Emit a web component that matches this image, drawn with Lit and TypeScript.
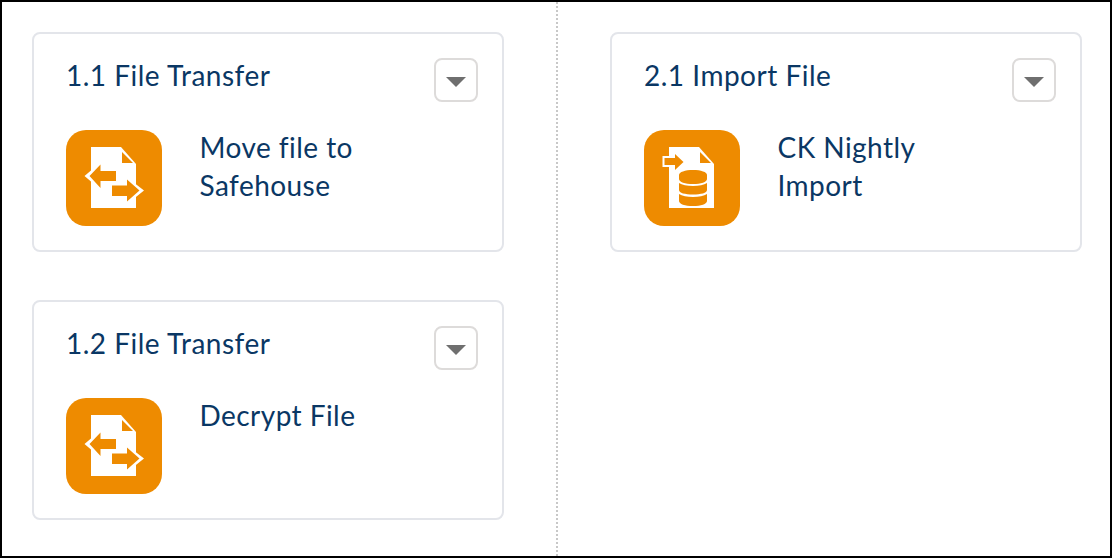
import {LitElement, html, css, svg} from 'lit';
import {customElement, property} from 'lit/decorators.js';

const page = svg`<path d="M25 17H55L70 34V78H25Z" fill="#fff"/><path d="M56 22V33H67Z" fill="#ee8b00"/>`;

const transferIcon = svg`
  ${page}
  <path d="M18.5 46L35.500 31.500V39H52V52H35.500V60.500Z" fill="#fff"/>
  <path d="M23.500 46L34.500 34.500V41H50V51H34.500V58Z" fill="#ee8b00"/>
  <path d="M78 60.500L60 46.500V54H44V67H60V75Z" fill="#fff"/>
  <path d="M73.500 60.500L61 49.500V55.500H46V66H61V71.500Z" fill="#ee8b00"/>
`;

const importIcon = svg`
  ${page}
  <path d="M18.500 26H30V22L41 32L30 42V37H18.500Z" fill="#fff"/>
  <path d="M20.500 28H31V24L39.500 32L31 40V35H20.500Z" fill="#ee8b00"/>
  <path d="M35 45C35 42 41 40 49 40C57 40 63 42 63 45V49C63 52 57 54 49 54C41 54 35 52 35 49Z" fill="#ee8b00"/>
  <path d="M35 53C38 55 43 56 49 56C55 56 60 55 63 53V60C63 63 57 64.500 49 64.500C41 64.500 35 63 35 60Z" fill="#ee8b00"/>
  <path d="M35 64C38 66 43 67 49 67C55 67 60 66 63 64V71C63 74 57 76 49 76C41 76 35 74 35 71Z" fill="#ee8b00"/>
`;

@customElement('step-card')
class StepCard extends LitElement {
  @property() heading = '';
  @property() label = '';
  @property() icon = 'transfer';

  static styles = css`
    :host {
      display: block;
      width: 472px;
      height: 220px;
      box-sizing: border-box;
      border: 2px solid #e3e5ea;
      border-radius: 8px;
      padding: 22px 24px 0 32px;
      color: #0a3764;
      font-family: Lato, "Open Sans", sans-serif;
    }
    .head {
      display: flex;
      justify-content: space-between;
      align-items: flex-start;
      height: 74px;
    }
    .title {
      font-size: 28px;
      line-height: 38px;
      letter-spacing: 0.5px;
    }
    .menu {
      width: 44px;
      height: 44px;
      margin-top: 2px;
      box-sizing: border-box;
      border: 2px solid #dddbda;
      border-radius: 8px;
      display: flex;
      align-items: center;
      justify-content: center;
    }
    .menu svg {
      margin-top: 3px;
    }
    .body {
      display: flex;
      gap: 38px;
    }
    .badge {
      width: 96px;
      height: 96px;
      display: block;
      flex: none;
    }
    .label {
      width: 190px;
      font-size: 28px;
      line-height: 38px;
      letter-spacing: 0.45px;
      margin: -2px 0 0 -0.5px;
    }
  `;

  render() {
    return html`
      <div class="head">
        <div class="title">${this.heading}</div>
        <div class="menu">
          <svg width="20" height="11" viewBox="0 0 20 11"><path d="M0 1H20L10 11Z" fill="#6f6f6f"/></svg>
        </div>
      </div>
      <div class="body">
        <svg class="badge" viewBox="0 0 96 96">
          <rect width="96" height="96" rx="20" fill="#ee8b00"/>
          ${this.icon === 'import' ? importIcon : transferIcon}
        </svg>
        <div class="label">${this.label}</div>
      </div>
    `;
  }
}

@customElement('app-root')
class AppRoot extends LitElement {
  static styles = css`
    :host {
      display: grid;
      grid-template-columns: 554px 1fr;
      width: 1112px;
      height: 558px;
      box-sizing: border-box;
      border: 2px solid #000;
      background: #fff;
    }
    .col {
      display: flex;
      flex-direction: column;
      gap: 48px;
      padding: 30px 0 0 30px;
    }
    .col + .col {
      border-left: 2px dotted #c8c8c8;
      padding-left: 52px;
    }
  `;

  render() {
    return html`
      <div class="col">
        <step-card heading="1.1 File Transfer" label="Move file to Safehouse"></step-card>
        <step-card heading="1.2 File Transfer" label="Decrypt File"></step-card>
      </div>
      <div class="col">
        <step-card heading="2.1 Import File" label="CK Nightly Import" icon="import"></step-card>
      </div>
    `;
  }
}
